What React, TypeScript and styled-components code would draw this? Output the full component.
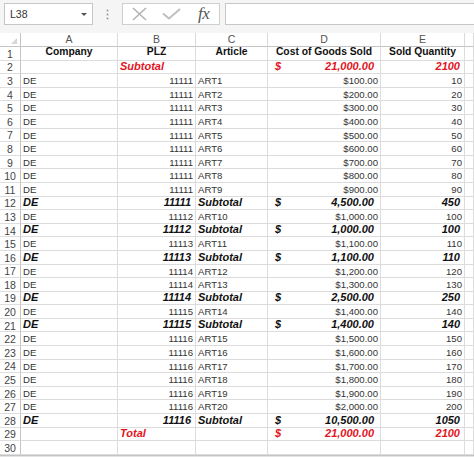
import React from 'react';
import styled, { createGlobalStyle, css } from 'styled-components';

const GlobalStyle = createGlobalStyle`
  html, body { margin: 0; padding: 0; background: #fff; overflow: hidden; }
  body { font-family: "Liberation Sans", Arial, sans-serif; }
`;

const Window = styled.div`
  width: 474px;
  height: 457px;
  overflow: hidden;
  background: #e4e4e4;
  display: flex;
  flex-direction: column;
`;

const FormulaBar = styled.div`
  height: 33px;
  flex: none;
  box-sizing: border-box;
  display: flex;
  align-items: flex-start;
  padding: 3px 0 0 4px;
  background: #f5f5f5;
`;

const NameBox = styled.div`
  width: 89px;
  height: 22px;
  box-sizing: border-box;
  border: 1px solid #c6c6c6;
  background: #fff;
  display: flex;
  align-items: center;
  justify-content: space-between;
  padding: 0 5px 0 5px;
  font-size: 10.5px;
  color: #333;
`;

const DropArrow = styled.span`
  width: 0;
  height: 0;
  border-left: 3px solid transparent;
  border-right: 3px solid transparent;
  border-top: 3px solid #555;
  margin-top: 1px;
`;

const Grip = styled.div`
  width: 29px;
  height: 22px;
  display: flex;
  flex-direction: column;
  align-items: center;
  justify-content: center;
  gap: 3px;
`;

const GripDot = styled.span`
  width: 1px;
  height: 1px;
  background: #8a8a8a;
  box-shadow: 0 0 0 0.5px #bbb;
`;

const ButtonsBox = styled.div`
  width: 98px;
  height: 22px;
  box-sizing: border-box;
  border: 1px solid #cfcfcf;
  background: #fff;
  display: flex;
  align-items: center;
  padding-left: 9px;
`;

const IconSlot = styled.span<{ $gap: number }>`
  display: flex;
  align-items: center;
  margin-right: ${(p) => p.$gap}px;
`;

const FxText = styled.span`
  font-family: "Liberation Serif", "Times New Roman", serif;
  font-style: italic;
  font-size: 17px;
  line-height: 17px;
  color: #555;
  letter-spacing: -0.5px;
  margin-top: -2px;
`;

const FormulaInput = styled.div`
  flex: 1;
  height: 22px;
  margin-left: 5px;
  margin-right: -1px;
  box-sizing: border-box;
  border: 1px solid #c6c6c6;
  background: #fff;
`;

const Sheet = styled.div`
  flex: none;
  display: grid;
  grid-template-columns: 21px 97px 78px 72px 113px 84px 1fr;
  grid-template-rows: 14px repeat(30, 13.6px);
  background: #fff;
`;

const BaseCell = styled.div`
  box-sizing: border-box;
  border-right: 1px solid #dcdcdc;
  border-bottom: 1px solid #dcdcdc;
  overflow: hidden;
  white-space: nowrap;
  min-width: 0;
  display: flex;
`;

const Corner = styled(BaseCell)`
  position: relative;
  background: #fff;
  border-right-color: #c4c4c4;
  border-bottom-color: #c4c4c4;
  &::after {
    content: '';
    position: absolute;
    right: 3px;
    bottom: 2px;
    width: 0;
    height: 0;
    border-left: 6px solid transparent;
    border-bottom: 6px solid #d6d6d6;
  }
`;

const ColHead = styled(BaseCell)`
  background: #fff;
  justify-content: center;
  align-items: center;
  font-size: 10.5px;
  color: #555;
  border-bottom-color: #c4c4c4;
  border-right-color: #dadada;
  padding-bottom: 1px;
`;

const RowNum = styled(BaseCell)`
  background: #fff;
  justify-content: center;
  align-items: center;
  font-size: 10.5px;
  color: #444;
  border-right-color: #c4c4c4;
  border-bottom-color: #dedede;
  padding-top: 1px;
`;

type Tone = 'plain' | 'head' | 'bold' | 'red';
type Align = 'left' | 'right' | 'center' | 'split';

const toneStyles = {
  plain: css`
    font-size: 9.6px;
    color: #333;
  `,
  head: css`
    font-size: 10.3px;
    font-weight: bold;
    color: #111;
  `,
  bold: css`
    font-size: 11px;
    font-weight: bold;
    font-style: italic;
    color: #111;
  `,
  red: css`
    font-size: 11px;
    font-weight: bold;
    font-style: italic;
    color: #e3141d;
  `,
};

const DataCell = styled(BaseCell)<{ $tone: Tone; $align: Align }>`
  align-items: flex-end;
  line-height: 1;
  padding: 0 2px 1px 2px;
  ${(p) => toneStyles[p.$tone]}
  justify-content: ${(p) =>
    p.$align === 'right'
      ? 'flex-end'
      : p.$align === 'center'
      ? 'center'
      : p.$align === 'split'
      ? 'space-between'
      : 'flex-start'};
  ${(p) =>
    (p.$tone === 'bold' || p.$tone === 'red') &&
    p.$align === 'right' &&
    css`
      padding-right: 4px;
    `}
  ${(p) =>
    p.$align === 'split' &&
    css`
      padding-left: 7px;
      padding-right: 6px;
    `}
  ${(p) =>
    p.$tone === 'head' &&
    css`
      padding-bottom: 2px;
    `}
`;

const EmptyCell = styled(BaseCell)``;

const BottomEdge = styled.div`
  flex: 1;
  background: #e4e4e4;
  border-top: 1px solid #c4c4c4;
`;

type RowData = {
  kind: 'item' | 'sub' | 'red' | 'head' | 'empty';
  a?: string;
  b?: string;
  c?: string;
  d?: string;
  e?: string;
};

const rows: RowData[] = [
  { kind: 'head', a: 'Company', b: 'PLZ', c: 'Article', d: 'Cost of Goods Sold', e: 'Sold Quantity' },
  { kind: 'red', b: 'Subtotal', d: '21,000.00', e: '2100' },
  ...[1, 2, 3, 4, 5, 6, 7, 8, 9].map((n) => ({
    kind: 'item' as const,
    a: 'DE',
    b: '11111',
    c: `ART${n}`,
    d: `$${n}00.00`,
    e: `${n * 10}`,
  })),
  { kind: 'sub', a: 'DE', b: '11111', c: 'Subtotal', d: '4,500.00', e: '450' },
  { kind: 'item', a: 'DE', b: '11112', c: 'ART10', d: '$1,000.00', e: '100' },
  { kind: 'sub', a: 'DE', b: '11112', c: 'Subtotal', d: '1,000.00', e: '100' },
  { kind: 'item', a: 'DE', b: '11113', c: 'ART11', d: '$1,100.00', e: '110' },
  { kind: 'sub', a: 'DE', b: '11113', c: 'Subtotal', d: '1,100.00', e: '110' },
  { kind: 'item', a: 'DE', b: '11114', c: 'ART12', d: '$1,200.00', e: '120' },
  { kind: 'item', a: 'DE', b: '11114', c: 'ART13', d: '$1,300.00', e: '130' },
  { kind: 'sub', a: 'DE', b: '11114', c: 'Subtotal', d: '2,500.00', e: '250' },
  { kind: 'item', a: 'DE', b: '11115', c: 'ART14', d: '$1,400.00', e: '140' },
  { kind: 'sub', a: 'DE', b: '11115', c: 'Subtotal', d: '1,400.00', e: '140' },
  ...[15, 16, 17, 18, 19, 20].map((n) => ({
    kind: 'item' as const,
    a: 'DE',
    b: '11116',
    c: `ART${n}`,
    d: `$${(n * 100).toLocaleString('en-US')}.00`,
    e: `${n * 10}`,
  })),
  { kind: 'sub', a: 'DE', b: '11116', c: 'Subtotal', d: '10,500.00', e: '1050' },
  { kind: 'red', b: 'Total', d: '21,000.00', e: '2100' },
  { kind: 'empty' },
];

const CloseIcon = () => (
  <svg width="15" height="14" viewBox="0 0 15 14">
    <path d="M1 1 L14 13 M14 1 L1 13" stroke="#b4b4b4" strokeWidth="1.6" fill="none" />
  </svg>
);

const CheckIcon = () => (
  <svg width="19" height="12" viewBox="0 0 19 12">
    <polyline points="1,5.5 7,10.5 18,1" stroke="#bfbfbf" strokeWidth="2" fill="none" />
  </svg>
);

function renderRow(r: RowData, i: number) {
  const key = `r${i}`;
  const cells: React.ReactNode[] = [<RowNum key={`${key}n`}>{i + 1}</RowNum>];
  if (r.kind === 'empty') {
    for (let c = 0; c < 6; c++) cells.push(<EmptyCell key={`${key}${c}`} />);
    return cells;
  }
  if (r.kind === 'head') {
    cells.push(
      <DataCell key={`${key}a`} $tone="head" $align="center">{r.a}</DataCell>,
      <DataCell key={`${key}b`} $tone="head" $align="center">{r.b}</DataCell>,
      <DataCell key={`${key}c`} $tone="head" $align="center">{r.c}</DataCell>,
      <DataCell key={`${key}d`} $tone="head" $align="center">{r.d}</DataCell>,
      <DataCell key={`${key}e`} $tone="head" $align="center">{r.e}</DataCell>,
      <EmptyCell key={`${key}f`} />
    );
    return cells;
  }
  if (r.kind === 'red') {
    cells.push(
      <EmptyCell key={`${key}a`} />,
      <DataCell key={`${key}b`} $tone="red" $align="left">{r.b}</DataCell>,
      <EmptyCell key={`${key}c`} />,
      <DataCell key={`${key}d`} $tone="red" $align="split">
        <span>$</span>
        <span>{r.d}</span>
      </DataCell>,
      <DataCell key={`${key}e`} $tone="red" $align="right">{r.e}</DataCell>,
      <EmptyCell key={`${key}f`} />
    );
    return cells;
  }
  const tone: Tone = r.kind === 'sub' ? 'bold' : 'plain';
  cells.push(
    <DataCell key={`${key}a`} $tone={tone} $align="left">{r.a}</DataCell>,
    <DataCell key={`${key}b`} $tone={tone} $align="right">{r.b}</DataCell>,
    <DataCell key={`${key}c`} $tone={tone} $align="left">{r.c}</DataCell>,
    r.kind === 'sub' ? (
      <DataCell key={`${key}d`} $tone={tone} $align="split">
        <span>$</span>
        <span>{r.d}</span>
      </DataCell>
    ) : (
      <DataCell key={`${key}d`} $tone={tone} $align="right">{r.d}</DataCell>
    ),
    <DataCell key={`${key}e`} $tone={tone} $align="right">{r.e}</DataCell>,
    <EmptyCell key={`${key}f`} />
  );
  return cells;
}

export default function App() {
  return (
    <Window>
      <GlobalStyle />
      <FormulaBar>
        <NameBox>
          <span>L38</span>
          <DropArrow />
        </NameBox>
        <Grip>
          <GripDot />
          <GripDot />
          <GripDot />
        </Grip>
        <ButtonsBox>
          <IconSlot $gap={15}>
            <CloseIcon />
          </IconSlot>
          <IconSlot $gap={17}>
            <CheckIcon />
          </IconSlot>
          <IconSlot $gap={0}>
            <FxText>fx</FxText>
          </IconSlot>
        </ButtonsBox>
        <FormulaInput />
      </FormulaBar>
      <Sheet>
        <Corner />
        {['A', 'B', 'C', 'D', 'E', ''].map((l, i) => (
          <ColHead key={`h${i}`}>{l}</ColHead>
        ))}
        {rows.map((r, i) => renderRow(r, i))}
      </Sheet>
      <BottomEdge />
    </Window>
  );
}
